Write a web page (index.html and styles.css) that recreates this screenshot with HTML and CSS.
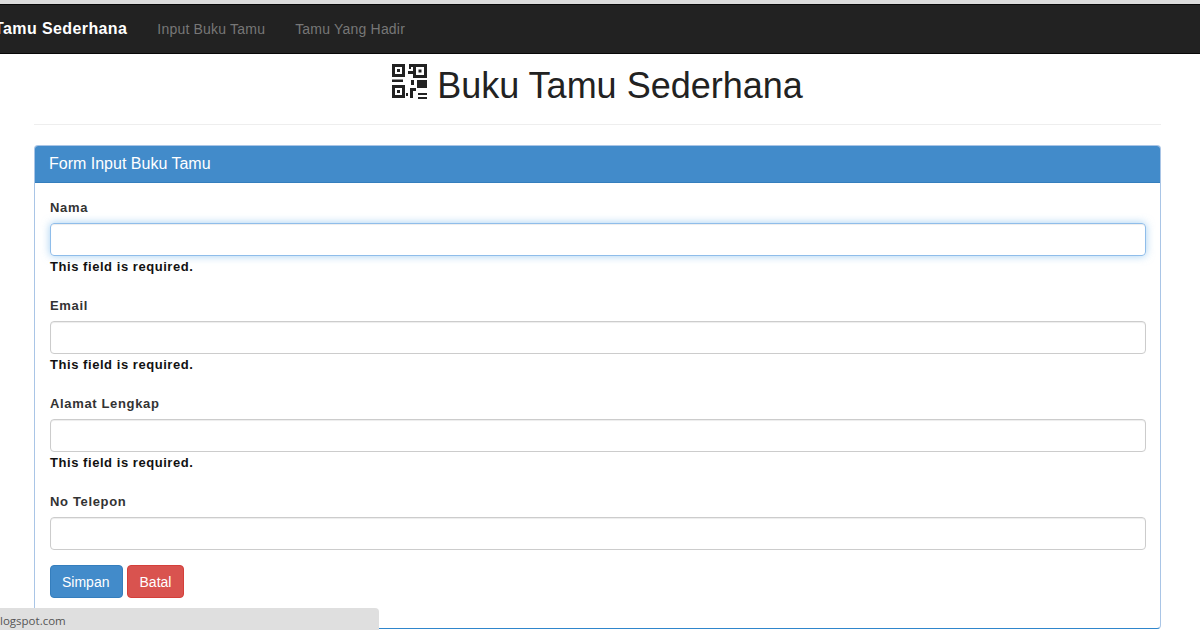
FILE: index.html
```html
<!DOCTYPE html>
<html lang="id">
<head>
<meta charset="utf-8">
<title>Buku Tamu Sederhana</title>
<link rel="stylesheet" href="styles.css">
</head>
<body>
<nav class="navbar">
  <a class="brand">Tamu Sederhana</a>
  <a class="nav-link">Input Buku Tamu</a>
  <a class="nav-link">Tamu Yang Hadir</a>
</nav>
<main class="container">
  <header class="page-header">
    <h1 class="title">
      <svg class="qr" viewBox="0 0 36 36" width="36" height="36" aria-hidden="true">
        <path fill-rule="evenodd" fill="#222" d="M1 1h13v13H1zM4 4v7h7V4zM6 6h3v3H6zM22 1h14v14H22zM25 4v8h8V4zM27.500 6.500h3v3h-3zM1 22h13v13H1zM4 25v7h7v-7zM6 27h3v3H6zM1 16.500h11V19H1zM18 1h4v3h-2v2h-2zM17 8h5v3h-5zM20 17h3v5h-3zM26 17h10v8H26zM19 25h6v3h-3v7h-3zM27 30h9v2h-9zM27 34h9v2h-9zM15 30h2v3h-2z"/>
      </svg>
      <span>Buku Tamu Sederhana</span>
    </h1>
  </header>
  <section class="panel">
    <div class="panel-heading">Form Input Buku Tamu</div>
    <form class="panel-body">
      <div class="field">
        <label class="label">Nama</label>
        <div class="input input-focus"></div>
        <div class="error">This field is required.</div>
      </div>
      <div class="field">
        <label class="label">Email</label>
        <div class="input"></div>
        <div class="error">This field is required.</div>
      </div>
      <div class="field">
        <label class="label">Alamat Lengkap</label>
        <div class="input"></div>
        <div class="error">This field is required.</div>
      </div>
      <div class="field field-last">
        <label class="label">No Telepon</label>
        <div class="input"></div>
      </div>
      <div class="actions">
        <button type="button" class="btn btn-primary">Simpan</button>
        <button type="button" class="btn btn-danger">Batal</button>
      </div>
    </form>
  </section>
</main>
<div class="status"><span class="status-text">blogspot.com</span></div>
</body>
</html>
```
FILE: styles.css
```css
* { box-sizing: border-box; }
html, body { margin: 0; height: 630px; overflow: hidden; }
body {
  position: relative;
  background: #fff;
  color: #333;
  font-family: "Liberation Sans", Arial, sans-serif;
  font-size: 14px;
  border-top: 4px solid #dcdcdc;
}
.navbar {
  display: flex;
  align-items: center;
  height: 50px;
  background: #222;
  border-top: 1px solid #080808;
  border-bottom: 1px solid #080808;
}
.brand {
  margin-left: -6px;
  margin-right: 30px;
  color: #fff;
  font-size: 16px;
  font-weight: bold;
  letter-spacing: 0.4px;
  white-space: nowrap;
}
.nav-link {
  margin-right: 30px;
  color: #777;
  font-size: 14px;
  letter-spacing: 0.2px;
  white-space: nowrap;
}
.container { padding: 0 39px 0 34px; }
.page-header {
  height: 71px;
  border-bottom: 1px solid #eee;
  margin-bottom: 20px;
}
.title {
  display: flex;
  justify-content: center;
  align-items: flex-start;
  gap: 10px;
  margin: 0;
  padding: 12px 1px 0 0;
  font-size: 36px;
  font-weight: normal;
  line-height: 40px;
  color: #222;
}
.qr { display: block; flex: none; margin-top: -3px; }
.panel {
  height: 484px;
  border: 1px solid #a9c5e6;
  border-bottom-color: #2f86cc;
  border-radius: 4px;
  overflow: hidden;
}
.panel-heading {
  height: 37px;
  padding: 9px 14px 0;
  background: #428bca;
  border-bottom: 1px solid #357ebd;
  color: #fff;
  font-size: 16px;
  line-height: 18px;
}
.panel-body { padding: 15px 14px 15px 15px; }
.field { height: 98px; }
.field-last { height: 73px; }
.label {
  display: block;
  height: 25px;
  font-size: 13px;
  line-height: 20px;
  font-weight: bold;
  letter-spacing: 0.65px;
  color: #333;
}
.input {
  height: 33px;
  border: 1px solid #ccc;
  border-radius: 4px;
  box-shadow: inset 0 1px 1px rgba(0,0,0,.075);
}
.input-focus {
  border-color: #8fbdea;
  box-shadow: inset 0 1px 1px rgba(0,0,0,.075), 0 0 8px rgba(102,175,233,.6);
}
.error {
  margin-top: 2px;
  font-size: 13px;
  line-height: 18px;
  font-weight: bold;
  letter-spacing: 0.55px;
  color: #111;
}
.actions { display: flex; gap: 4px; }
.btn {
  height: 33px;
  padding: 0 11px;
  border-radius: 4px;
  border: 1px solid;
  color: #fff;
  font-family: inherit;
  font-size: 14px;
}
.btn-primary { background: #428bca; border-color: #357ebd; width: 73px; padding-right: 13px; }
.btn-danger { background: #d9534f; border-color: #d43f3a; width: 57px; }
.status {
  position: absolute;
  left: 0;
  top: 604px;
  width: 379px;
  height: 22px;
  background: #dfdfdf;
  border-top-right-radius: 4px;
  color: #555;
  font-family: "Open Sans", sans-serif;
  font-size: 11.5px;
  line-height: 26px;
  overflow: hidden;
  white-space: nowrap;
}
.status-text { display: block; margin-left: -7px; }
```
